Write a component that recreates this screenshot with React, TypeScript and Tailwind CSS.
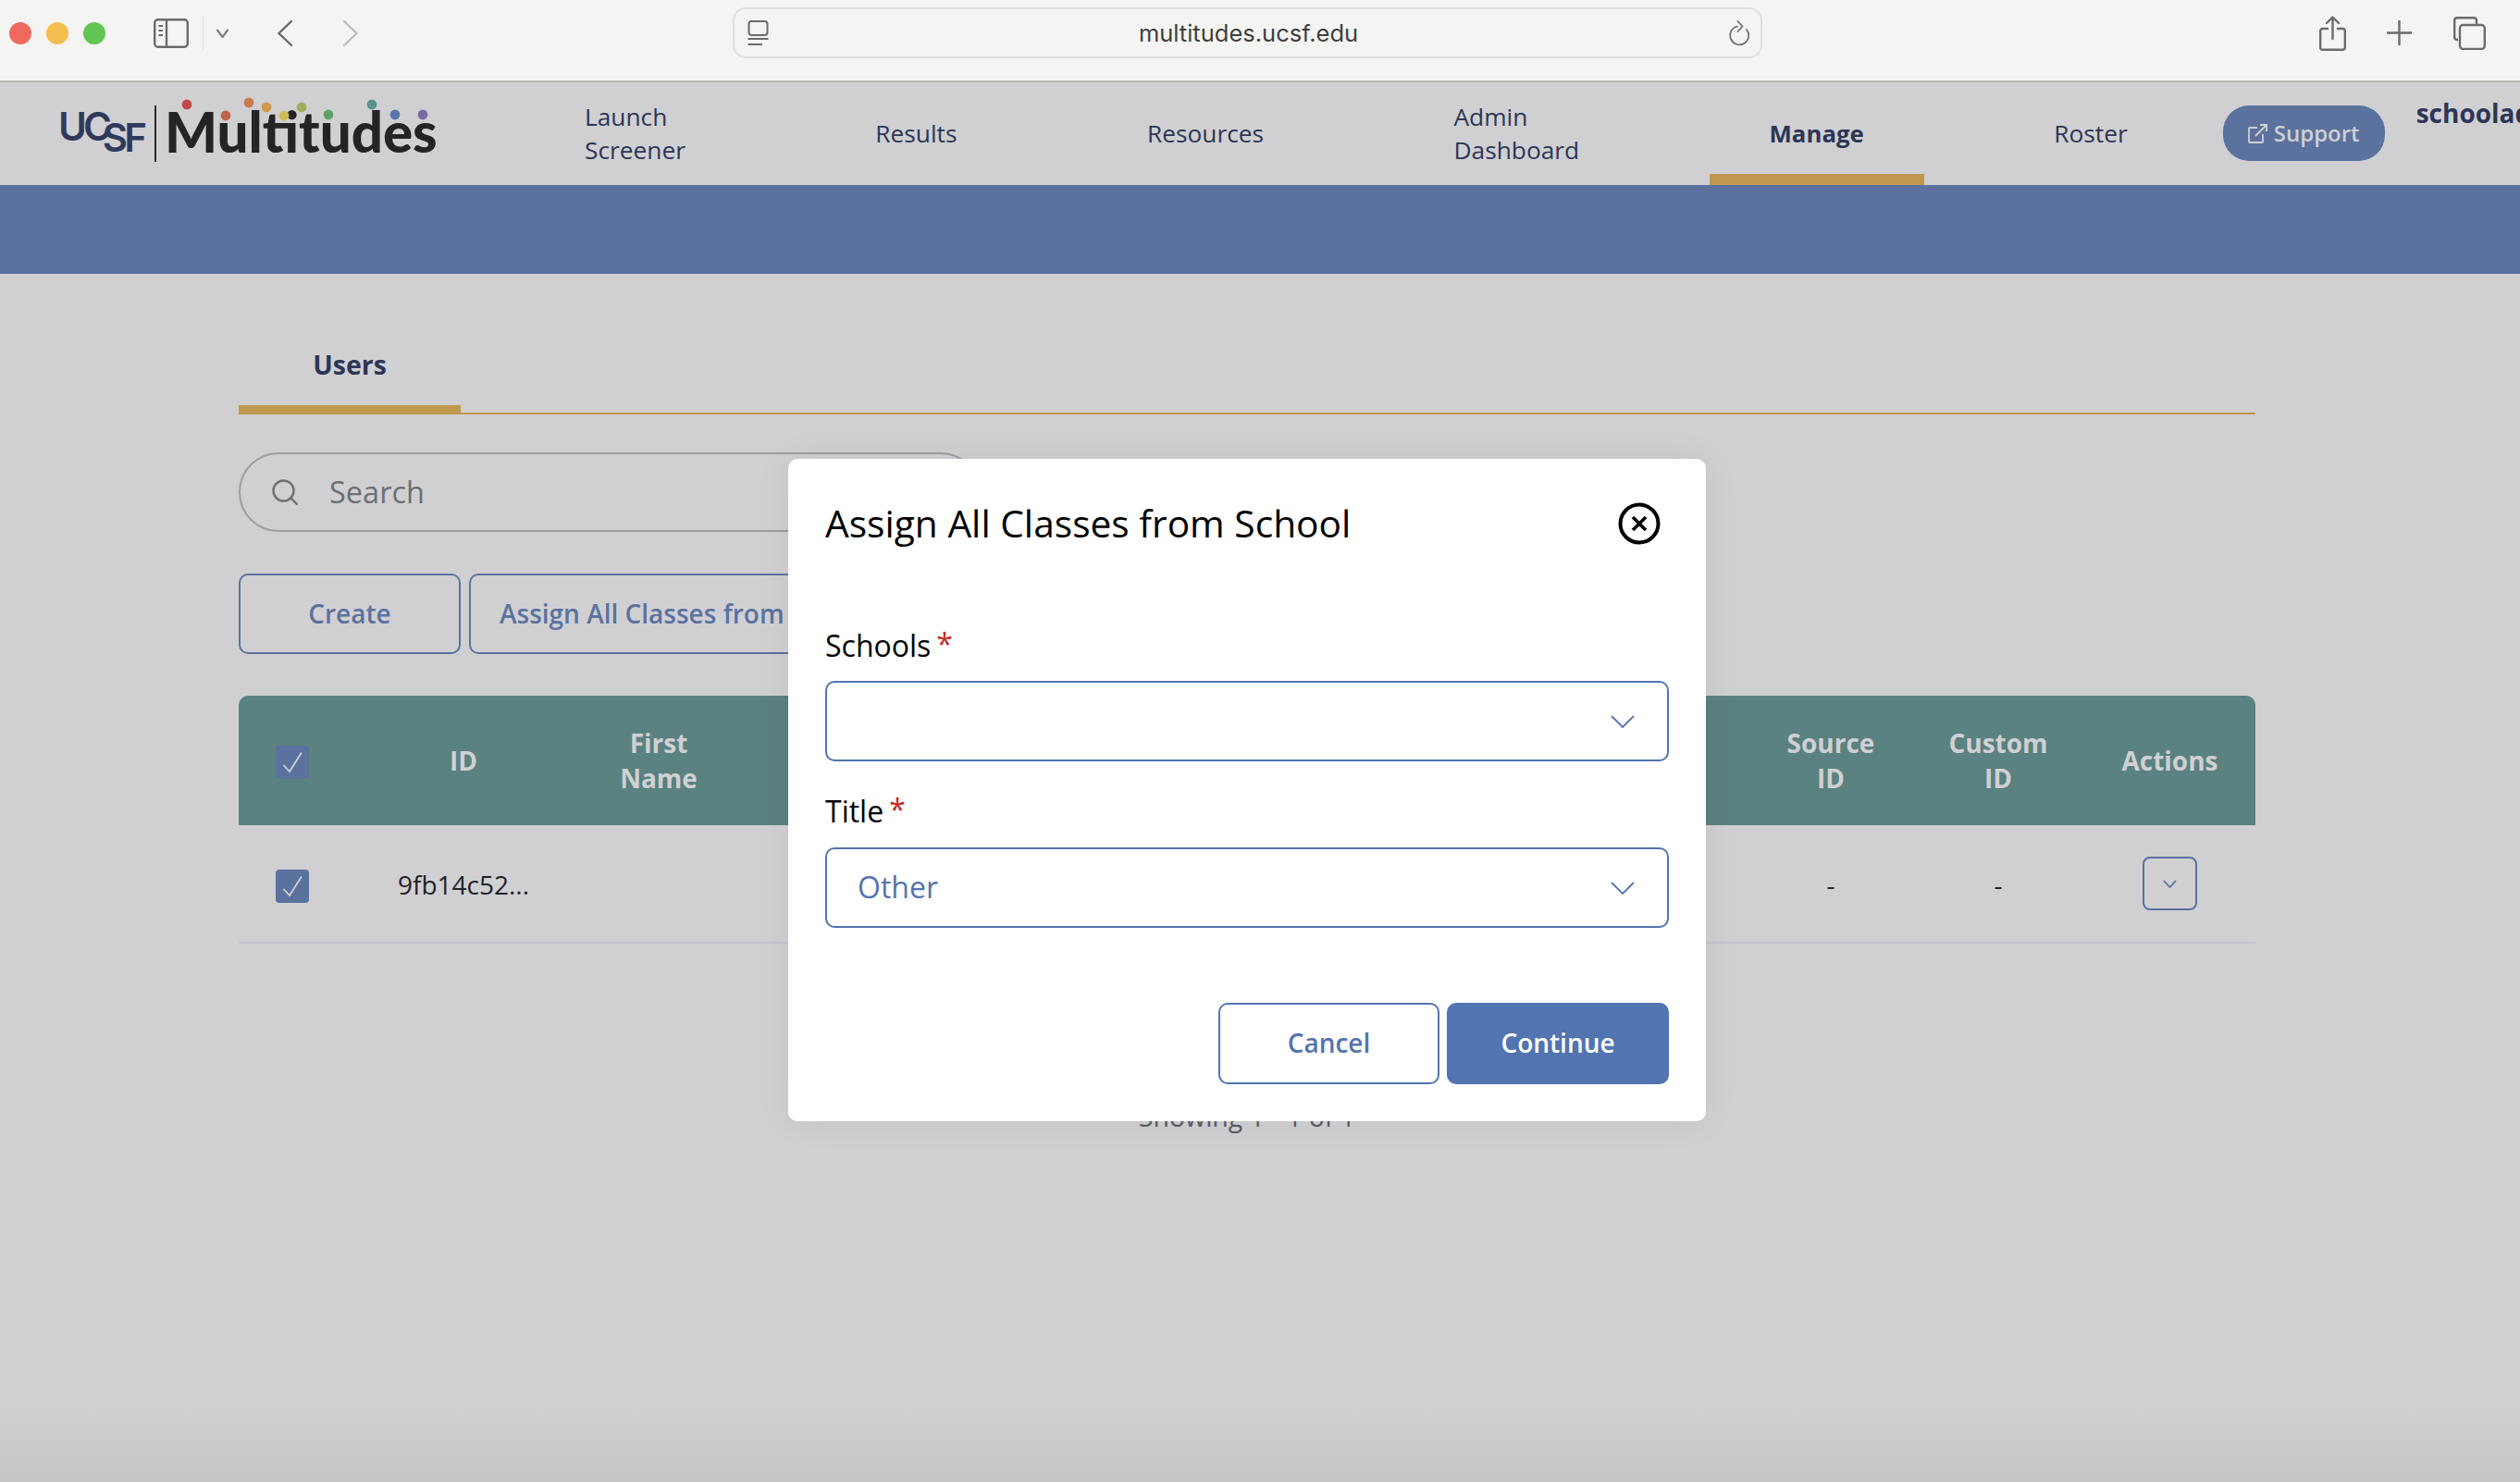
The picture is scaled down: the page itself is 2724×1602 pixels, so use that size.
import React from "react";

const CheckBox = () => (
  <div className="w-[36px] h-[36px] rounded-[4px] bg-[#5b729f] flex items-center justify-center">
    <svg width="24" height="24" viewBox="0 0 24 24" fill="none" stroke="#d0d0d3" strokeWidth="1.8">
      <path d="M2.5 15 L9 22 L22 1.5" />
    </svg>
  </div>
);

const Chevron = ({ w = 26, h = 14, color = "#5274b0", sw = 1.8 }: { w?: number; h?: number; color?: string; sw?: number }) => (
  <svg width={w} height={h} viewBox={`0 0 ${w} ${h}`} fill="none" stroke={color} strokeWidth={sw}>
    <path d={`M1 1 L${w / 2} ${h - 1} L${w - 1} 1`} />
  </svg>
);

const Dot = ({ cx, cy, c }: { cx: number; cy: number; c: string }) => <circle cx={cx} cy={cy} r="5.4" fill={c} />;

const NavItem = ({ children, active }: { children: React.ReactNode; active?: boolean }) => (
  <div
    className={`h-full px-[65px] flex items-center border-b-[12px] pt-[10px] leading-[36px] text-[#2d3655] ${
      active ? "border-[#c0974f] font-bold text-[25.8px]" : "border-transparent text-[26.3px]"
    }`}
  >
    <div>{children}</div>
  </div>
);

function BrowserBar() {
  const ic = "#6b6b69";
  return (
    <div className="h-[89px] bg-[#f4f4f2] border-b-2 border-[#b6b6b6] pb-[16px] flex items-center">
      <div className="ml-[10px] w-[24px] h-[24px] rounded-full bg-[#f0695f]" />
      <div className="ml-[16px] w-[24px] h-[24px] rounded-full bg-[#f6bd4f]" />
      <div className="ml-[16px] w-[24px] h-[24px] rounded-full bg-[#61c554]" />
      <svg className="ml-[52px]" width="38" height="32" viewBox="0 0 38 32" fill="none" stroke={ic} strokeWidth="2.4">
        <rect x="1.2" y="1.2" width="35.6" height="29.6" rx="3.5" />
        <path d="M14 1.2 V30.8" />
        <path d="M5.5 8 H10 M5.5 13 H10 M5.5 18 H10" strokeWidth="2" />
      </svg>
      <div className="ml-[15px] w-[1px] h-[36px] bg-[#dcdcda]" />
      <svg className="ml-[13px]" width="15" height="10" viewBox="0 0 15 10" fill="none" stroke="#7d7d7b" strokeWidth="2.2">
        <path d="M1.5 1 L7.5 9 L13.5 1" />
      </svg>
      <svg className="ml-[52px]" width="16" height="28" viewBox="0 0 16 28" fill="none" stroke={ic} strokeWidth="2.4" strokeLinecap="round">
        <path d="M15 1 L1.5 14 L15 27" />
      </svg>
      <svg className="ml-[55px]" width="16" height="28" viewBox="0 0 16 28" fill="none" stroke="#bdbdbb" strokeWidth="2.4" strokeLinecap="round">
        <path d="M1 1 L14.5 14 L1 27" />
      </svg>
      <div className="ml-[405px] w-[1113px] h-[55px] rounded-[14px] border-2 border-[#dfdfdd] flex items-center pl-[14px] pr-[11px]">
        <svg width="23" height="27" viewBox="0 0 23 27" fill="none" stroke={ic} strokeWidth="2">
          <rect x="1.5" y="1" width="20" height="15" rx="3" />
          <path d="M0.5 20 H22.5" />
          <path d="M0.5 26 H16" />
        </svg>
        <div className="flex-1 text-center font-['Inter',sans-serif] text-[25.5px] text-[#3f3f3f] leading-none">multitudes.ucsf.edu</div>
        <svg width="24" height="28" viewBox="0 0 24 28" fill="none" stroke={ic} strokeWidth="1.7" strokeLinecap="round" strokeLinejoin="round">
          <path d="M10 6.5 A10 10 0 1 0 20 10" />
          <path d="M10.5 1 L15.5 6.5 L10.5 12" />
        </svg>
      </div>
      <svg className="ml-[602px]" width="29" height="38" viewBox="0 0 29 38" fill="none" stroke={ic} strokeWidth="2.4" strokeLinecap="round" strokeLinejoin="round">
        <path d="M9 14 H3.5 A2.2 2.2 0 0 0 1.2 16.2 V34.5 A2.2 2.2 0 0 0 3.5 36.8 H25.5 A2.2 2.2 0 0 0 27.8 34.5 V16.2 A2.2 2.2 0 0 0 25.5 14 H20" />
        <path d="M14.5 25 V2 M8 8 L14.5 1.5 L21 8" />
      </svg>
      <svg className="ml-[44px]" width="27" height="27" viewBox="0 0 27 27" fill="none" stroke={ic} strokeWidth="2.4">
        <path d="M13.5 0 V27 M0 13.5 H27" />
      </svg>
      <svg className="ml-[45px]" width="35" height="36" viewBox="0 0 35 36" fill="none" stroke={ic} strokeWidth="2.4">
        <path d="M5 25 H4 A3 3 0 0 1 1.2 22 V4 A3 3 0 0 1 4 1.2 H22 A3 3 0 0 1 25 4 V9" />
        <rect x="7" y="9" width="26.8" height="26" rx="3.5" />
      </svg>
    </div>
  );
}

function Logo() {
  return (
    <div className="relative ml-[63px] w-[407px] h-full flex items-center shrink-0">
      <div className="flex items-start w-[93px] h-[42px] mb-[4px] shrink-0 font-['Inter',sans-serif] font-semibold text-[#2f3a5c] text-[42px] leading-[30px] tracking-[-4px]">
        <span>UC</span>
        <span className="mt-[12px] -ml-[6px]">SF</span>
      </div>
      <div className="ml-[11px] w-[2px] h-[61px] shrink-0 bg-[#2a2a2c]" />
      <div className="ml-[9px] mb-[5px] shrink-0 font-['Lato',sans-serif] font-black text-[60px] leading-[58px] text-[#242426]">Multitudes</div>
      <svg className="absolute left-0 top-0 pointer-events-none" width="407" height="110" viewBox="63 89 407 110">
        <Dot cx={202} cy={113} c="#c04a48" />
        <Dot cx={244} cy={125} c="#bf6549" />
        <Dot cx={269} cy={111} c="#c57b4d" />
        <Dot cx={288} cy={116} c="#d0994e" />
        <Dot cx={307} cy={125} c="#d0bc55" />
        <Dot cx={326} cy={116} c="#a0ad5c" />
        <Dot cx={355} cy={124} c="#5da263" />
        <Dot cx={402} cy={113} c="#5b918d" />
        <Dot cx={427} cy={124} c="#5878ab" />
        <Dot cx={457} cy={124} c="#7a6ca3" />
      </svg>
    </div>
  );
}

function SiteNav() {
  return (
    <div className="h-[111px] flex items-stretch overflow-hidden whitespace-nowrap">
      <Logo />
      <div className="ml-[97px] flex gap-[75.4px] h-full">
        <NavItem>Launch<br />Screener</NavItem>
        <NavItem>Results</NavItem>
        <NavItem>Resources</NavItem>
        <NavItem>Admin<br />Dashboard</NavItem>
        <NavItem active>Manage</NavItem>
        <NavItem>Roster</NavItem>
      </div>
      <div className="ml-[38px] self-start mt-[25px] w-[175px] h-[60px] rounded-[28px] bg-[#5b729f] text-[#d0d0d3] font-semibold text-[24px] flex items-center justify-center gap-[7px] shrink-0">
        <svg width="21" height="21" viewBox="0 0 21 21" fill="none" stroke="#d0d0d3" strokeWidth="1.8">
          <path d="M10 4 H2 A1 1 0 0 0 1 5 V19 A1 1 0 0 0 2 20 H15 A1 1 0 0 0 16 19 V11" />
          <path d="M8 13 L20 1 M13 1 H20 V8" />
        </svg>
        <span>Support</span>
      </div>
      <div className="ml-[34px] mt-[15px] text-[28px] leading-[36px] font-bold text-[#2d3655]">schooladmin</div>
    </div>
  );
}

const HeadCell = ({ children }: { children: React.ReactNode }) => (
  <div className="text-center font-bold text-[28px] leading-[38px] text-[#d0d0d3]">{children}</div>
);

function Table() {
  const cols = "grid grid-cols-[116px_254px_168px_1fr_158px_204px_176px] items-center";
  return (
    <div className="mt-[45px]">
      <div className={`${cols} h-[140px] bg-[#5a8280] rounded-t-[10px]`}>
        <div className="pl-[40px] pt-[4px]"><CheckBox /></div>
        <HeadCell>ID</HeadCell>
        <HeadCell>First<br />Name</HeadCell>
        <div />
        <HeadCell>Source<br />ID</HeadCell>
        <HeadCell>Custom<br />ID</HeadCell>
        <div className="pr-[9px]"><HeadCell>Actions</HeadCell></div>
      </div>
      <div className={`${cols} h-[128px] border-b-2 border-[#c5c3cd] text-[28px] text-[#222226]`}>
        <div className="pl-[40px] pt-[5px]"><CheckBox /></div>
        <div className="text-center pt-[2px]">9fb14c52...</div>
        <div />
        <div />
        <div className="text-center pt-[2px]">-</div>
        <div className="text-center pt-[2px]">-</div>
        <div className="pr-[9px] flex justify-center">
          <div className="w-[59px] h-[58px] rounded-[8px] border-2 border-[#5b729f] flex items-center justify-center">
            <Chevron w={15} h={9} color="#5b729f" sw={1.8} />
          </div>
        </div>
      </div>
    </div>
  );
}

function Modal() {
  const field = "w-[912px] h-[87px] rounded-[10px] border-2 border-[#5274b0] flex items-center justify-between pl-[33px] pr-[35px]";
  const label = "flex items-start gap-[6px] text-[32px] leading-[40px] text-black";
  const star = <span className="text-[#c8281e] text-[32px] leading-[36px]">*</span>;
  return (
    <div className="absolute left-[852px] top-[496px] w-[992px] h-[716px] bg-white rounded-[10px] px-[40px] shadow-[0_0_40px_rgba(0,0,0,0.06)]">
      <div className="mt-[30px] h-[80px] flex items-center justify-between">
        <div className="text-[40.7px] text-black pb-[1px]">Assign All Classes from School</div>
        <svg className="mr-[9px]" width="46" height="46" viewBox="0 0 46 46" fill="none" stroke="#000" strokeWidth="4">
          <circle cx="23" cy="23" r="20.5" />
          <path d="M16 16 L30 30 M30 16 L16 30" strokeWidth="3.6" />
        </svg>
      </div>
      <div className={`mt-[72px] ${label}`}>Schools{star}</div>
      <div className={`mt-[18px] ${field}`}>
        <span />
        <Chevron />
      </div>
      <div className={`mt-[34px] ${label}`}>Title{star}</div>
      <div className={`mt-[19px] ${field} text-[32px] text-[#5274b0]`}>
        <span className="-mt-[2px]">Other</span>
        <Chevron />
      </div>
      <div className="mt-[81px] flex justify-end gap-[8px] text-[28px] font-semibold">
        <div className="w-[239px] h-[88px] rounded-[10px] border-2 border-[#5274b0] text-[#5274b0] flex items-center justify-center pb-[2px]">Cancel</div>
        <div className="w-[240px] h-[88px] rounded-[10px] bg-[#5274b0] text-white flex items-center justify-center pb-[2px]">Continue</div>
      </div>
    </div>
  );
}

export default function App() {
  return (
    <div className="relative w-screen h-screen overflow-hidden font-['Open_Sans',sans-serif] bg-[linear-gradient(to_bottom,#d0d0d3_95%,#c6c6c9_100%)]">
      <BrowserBar />
      <SiteNav />
      <div className="h-[96px] bg-[#5b729f]" />
      <div className="pl-[258px] pr-[286px]">
        <div className="pt-[54px] border-b-2 border-[#c0974f]">
          <div className="w-[240px] h-[98px] -mb-[2px] border-b-[10px] border-[#c0974f] flex items-center justify-center font-bold text-[28.5px] text-[#2d3655]">Users</div>
        </div>
        <div className="mt-[41px] w-[802px] h-[86px] rounded-full border-2 border-[#9d9da3] flex items-center pl-[34px] gap-[34px]">
          <svg width="28" height="28" viewBox="0 0 28 28" fill="none" stroke="#6e6e73" strokeWidth="2.4" strokeLinecap="round">
            <circle cx="12.5" cy="12.5" r="11" />
            <path d="M20.5 20.5 L27 27" />
          </svg>
          <span className="text-[32.5px] text-[#6e6e73]">Search</span>
        </div>
        <div className="mt-[45px] flex gap-[9px] text-[28px] font-semibold text-[#5b729f]">
          <div className="w-[240px] h-[87px] rounded-[10px] border-2 border-[#5b729f] flex items-center justify-center pb-[2px]">Create</div>
          <div className="w-[480px] h-[87px] rounded-[10px] border-2 border-[#5b729f] flex items-center pl-[31px] pb-[2px] whitespace-nowrap">Assign All Classes from School</div>
        </div>
        <Table />
        <div className="mt-[167px] text-center text-[28.5px] leading-[40px] text-[#5c5c62]">Showing 1 - 1 of 1</div>
      </div>
      <Modal />
    </div>
  );
}
